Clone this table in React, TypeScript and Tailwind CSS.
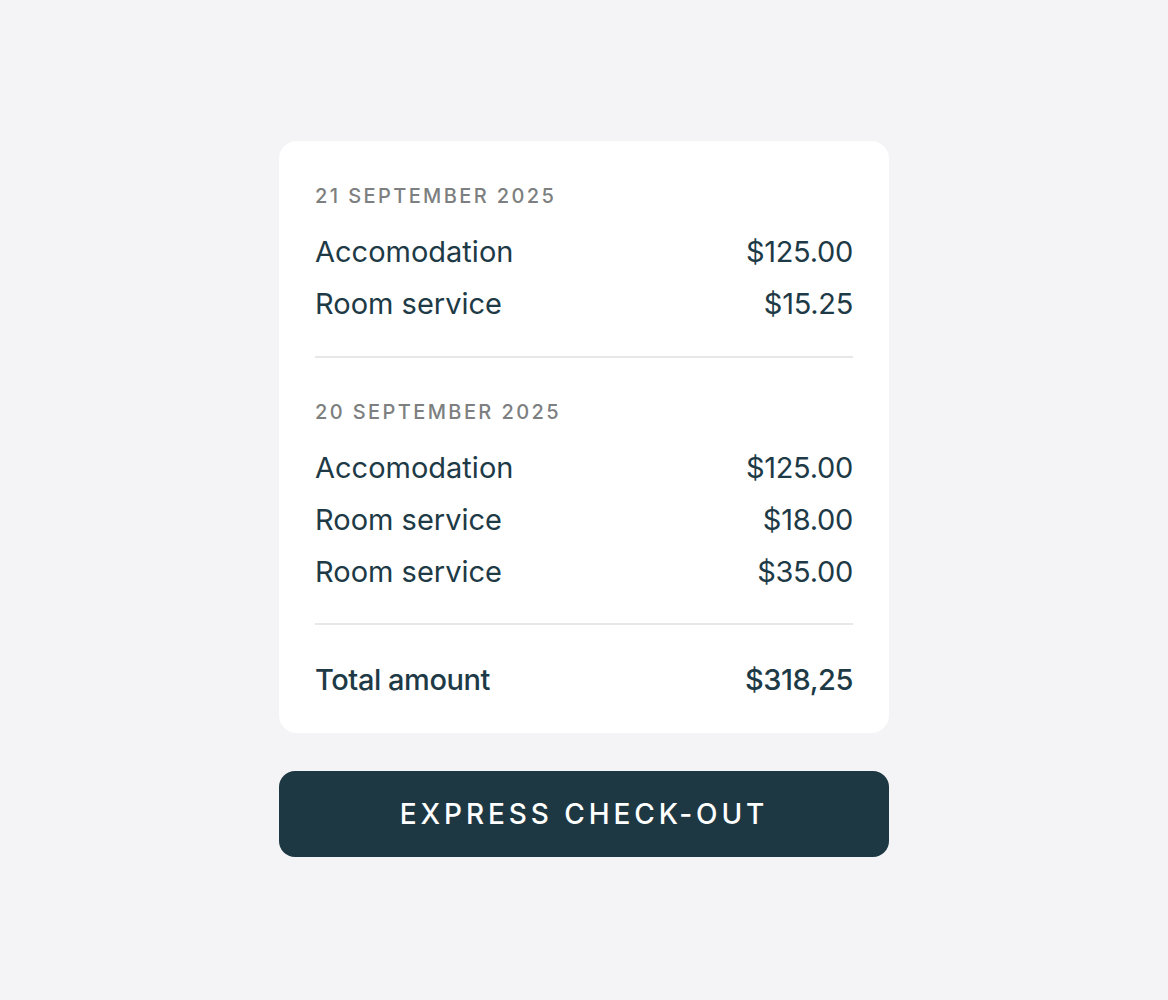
import React from "react";

type Item = { label: string; amount: string };
type Day = { date: string; items: Item[] };

const days: Day[] = [
  {
    date: "21 SEPTEMBER 2025",
    items: [
      { label: "Accomodation", amount: "$125.00" },
      { label: "Room service", amount: "$15.25" },
    ],
  },
  {
    date: "20 SEPTEMBER 2025",
    items: [
      { label: "Accomodation", amount: "$125.00" },
      { label: "Room service", amount: "$18.00" },
      { label: "Room service", amount: "$35.00" },
    ],
  },
];

const DaySection: React.FC<{ day: Day }> = ({ day }) => (
  <div className="flex flex-col">
    <div className="h-[38px] flex items-center text-[20px] font-medium tracking-[0.12em] text-[#7d7f80]">
      {day.date}
    </div>
    <div className="mt-[11px] flex flex-col">
      {day.items.map((item, i) => (
        <div
          key={i}
          className="h-[52px] flex items-center justify-between text-[29px] text-[#1d3a46]"
        >
          <span>{item.label}</span>
          <span className="tracking-[-0.01em]">{item.amount}</span>
        </div>
      ))}
    </div>
  </div>
);

export default function App() {
  return (
    <div
      className="h-[1000px] w-full flex items-center justify-center bg-[#f4f4f6]"
      style={{ fontFamily: "Inter, 'Liberation Sans', sans-serif" }}
    >
      <div className="w-[610px] flex flex-col -mt-[2px]">
        <div className="bg-white rounded-[18px] p-9 flex flex-col">
          <DaySection day={days[0]} />
          <div className="mt-[26px] mb-[35px] h-[2px] bg-[#e6e7e8]" />
          <DaySection day={days[1]} />
          <div className="mt-[25px] h-[2px] bg-[#e6e7e8]" />
          <div className="mt-[38px] h-[34px] flex items-center justify-between text-[29px] font-medium text-[#1d3a46] tracking-[-0.015em]">
            <span>Total amount</span>
            <span>$318,25</span>
          </div>
        </div>
        <button className="mt-[38px] h-[86px] rounded-[16px] bg-[#1e3843] text-white text-[28px] font-medium tracking-[0.14em]">
          EXPRESS CHECK-OUT
        </button>
      </div>
    </div>
  );
}
